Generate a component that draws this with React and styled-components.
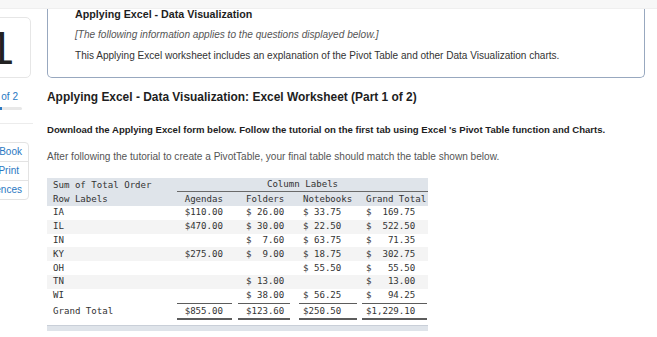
import React from 'react';
import styled, { createGlobalStyle } from 'styled-components';

const GlobalStyle = createGlobalStyle`
  html, body {
    margin: 0;
    padding: 0;
    background: #fff;
  }
  body {
    font-family: "Liberation Sans", Arial, sans-serif;
    color: #222;
    overflow: hidden;
  }
`;

const Page = styled.div`
  width: 657px;
  height: 337px;
  overflow: hidden;
`;

const TopBar = styled.div`
  height: 9px;
  background: #f7f7f7;
  border-bottom: 1px solid #efefef;
  box-sizing: border-box;
`;

const Layout = styled.div`
  display: flex;
`;

const Sidebar = styled.aside`
  flex: none;
  width: 34px;
  overflow: hidden;
`;

const SidebarInner = styled.div`
  width: 100px;
  margin-left: -66px;
  display: flex;
  flex-direction: column;
  align-items: flex-end;
`;

const NumberBox = styled.div`
  margin-top: 8px;
  margin-right: 3px;
  width: 60px;
  height: 61px;
  box-sizing: border-box;
  border: 1px solid #e6e6e6;
  border-radius: 5px;
  display: flex;
  align-items: center;
  justify-content: center;
  font-size: 47px;
  color: #222;
`;

const ProgressLabel = styled.div`
  margin-top: 13px;
  margin-right: 16px;
  font-size: 10px;
  line-height: 12px;
  color: #2a78c2;
  white-space: nowrap;
`;

const ProgressTrack = styled.div`
  margin-top: 4px;
  margin-right: 12px;
  width: 60px;
  height: 3px;
  border-radius: 2px;
  background: #e8e8e8;
  overflow: hidden;
`;

const ProgressFill = styled.div`
  height: 100%;
  background: #2a78c2;
`;

const Divider = styled.div`
  margin-top: 13px;
  margin-right: 1px;
  width: 99px;
  height: 1px;
  background: #ececec;
`;

const LinkBox = styled.ul`
  list-style: none;
  margin: 18px 5px 0 0;
  padding: 0;
  width: 70px;
  border: 1px solid #e3e3e3;
  border-radius: 4px;
`;

const LinkItem = styled.li`
  height: 18px;
  line-height: 18px;
  padding-right: ${props => props.$pad}px;
  text-align: right;
  font-size: 10px;
  color: #2a78c2;
  white-space: nowrap;
  border-bottom: ${props => (props.$last ? 'none' : '1px solid #e3e3e3')};
`;

const Main = styled.main`
  flex: none;
  width: 598px;
  margin-left: 13px;
  display: flex;
  flex-direction: column;
`;

const Card = styled.section`
  height: 69px;
  box-sizing: border-box;
  padding-left: 27px;
  border: 1px solid #98a8bf;
  border-top: none;
  border-radius: 0 0 5px 5px;
`;

const CardTitle = styled.div`
  margin-top: -1px;
  font-size: 10.7px;
  line-height: 12px;
  font-weight: bold;
  color: #1e1e1e;
`;

const CardNote = styled.div`
  margin-top: 9px;
  font-size: 10.1px;
  line-height: 12px;
  font-style: italic;
  color: #555;
`;

const CardText = styled.div`
  margin-top: 9px;
  font-size: 10.05px;
  line-height: 12px;
  color: #333;
`;

const Title = styled.h2`
  margin: 11px 0 0;
  font-size: 11.95px;
  line-height: 16px;
  font-weight: bold;
  color: #1e1e1e;
`;

const Instruction = styled.p`
  margin: 18px 0 0;
  font-size: 9.57px;
  line-height: 13px;
  font-weight: bold;
  color: #1e1e1e;
`;

const Note = styled.p`
  margin: 14px 0 0;
  font-size: 10.1px;
  line-height: 13px;
  color: #555;
`;

const PivotWrap = styled.div`
  margin-top: 15px;
  width: 381px;
`;

const Pivot = styled.table`
  width: 381px;
  border-collapse: collapse;
  table-layout: fixed;
  font-family: "DejaVu Sans Mono", "Liberation Mono", monospace;
  font-size: 9.1px;
  color: #333;
`;

const Row = styled.tr`
  background: ${props => props.$bg || '#fff'};
`;

const Cell = styled.td`
  padding: 0;
  height: ${props => props.$h || 13.8}px;
  vertical-align: middle;
`;

const Seg = styled.div`
  margin: 0 ${props => props.$mr || 0}px 0 ${props => props.$ml || 0}px;
  padding: 0 ${props => props.$pr || 0}px 0 ${props => props.$pl || 0}px;
  text-align: ${props => props.$align || 'left'};
  white-space: pre;
  line-height: ${props => props.$lh || 13}px;
  border-top: ${props => (props.$top ? '1px solid #5c5c5c' : 'none')};
  border-bottom: ${props => props.$bottom || 'none'};
`;

const BottomStrip = styled.div`
  margin-top: 5px;
  height: 5px;
  background: #dfe4ea;
  border-top: 1px solid #c9cfd8;
`;

const HEAD_BG = '#dfe4ea';
const STRIPE_BG = '#f4f4f4';

const widths = [128, 60, 59, 66, 68];

// segment offsets and text placement per value column
const cols = [
  { ml: 2, mr: 3, align: 'right', pr: 9, pl: 0 },
  { ml: 3, mr: 4, align: 'left', pr: 0, pl: 8 },
  { ml: 5, mr: 3, align: 'left', pr: 0, pl: 4 },
  { ml: 2, mr: 1, align: 'left', pr: 0, pl: 4 },
];

const headers = ['Agendas', 'Folders', 'Notebooks', 'Grand Total'];

const rows = [
  ['IA', '$110.00', '$ 26.00', '$ 33.75', '$  169.75'],
  ['IL', '$470.00', '$ 30.00', '$ 22.50', '$  522.50'],
  ['IN', '', '$  7.60', '$ 63.75', '$   71.35'],
  ['KY', '$275.00', '$  9.00', '$ 18.75', '$  302.75'],
  ['OH', '', '', '$ 55.50', '$   55.50'],
  ['TN', '', '$ 13.00', '', '$   13.00'],
  ['WI', '', '$ 38.00', '$ 56.25', '$   94.25'],
];

const total = ['Grand Total', '$855.00', '$123.60', '$250.50', '$1,229.10'];

const ValueCells = ({ values, ...segProps }) =>
  values.map((v, i) => (
    <Cell key={i} $h={segProps.$h}>
      <Seg
        $ml={cols[i].ml}
        $mr={cols[i].mr}
        $pl={cols[i].pl}
        $pr={cols[i].pr}
        $align={cols[i].align}
        {...segProps}
      >
        {v}
      </Seg>
    </Cell>
  ));

const PivotTable = () => (
  <PivotWrap>
    <Pivot>
      <colgroup>
        {widths.map((w, i) => (
          <col key={i} style={{ width: w }} />
        ))}
      </colgroup>
      <tbody>
        <Row $bg={HEAD_BG}>
          <Cell $h={14}>
            <Seg $pl={6}>Sum of Total Order</Seg>
          </Cell>
          <Cell colSpan={4} $h={14}>
            <Seg $ml={2} $align="center" $bottom="1px solid #6a6a6a" $lh={13}>
              Column Labels
            </Seg>
          </Cell>
        </Row>
        <Row $bg={HEAD_BG}>
          <Cell $h={14}>
            <Seg $pl={6}>Row Labels</Seg>
          </Cell>
          <ValueCells values={headers} $h={14} />
        </Row>
        {rows.map((r, idx) => (
          <Row key={r[0]} $bg={idx % 2 === 1 ? STRIPE_BG : '#fff'}>
            <Cell>
              <Seg $pl={6}>{r[0]}</Seg>
            </Cell>
            <ValueCells values={r.slice(1)} />
          </Row>
        ))}
        <Row>
          <Cell $h={17.4}>
            <Seg $pl={6}>{total[0]}</Seg>
          </Cell>
          <ValueCells
            values={total.slice(1)}
            $h={17.4}
            $top
            $lh={14}
            $bottom="2px solid #5c5c5c"
          />
        </Row>
      </tbody>
    </Pivot>
    <BottomStrip />
  </PivotWrap>
);

const sideLinks = [
  { label: 'eBook', pad: 6 },
  { label: 'Print', pad: 9 },
  { label: 'References', pad: 6 },
];

const App = () => (
  <Page>
    <GlobalStyle />
    <TopBar />
    <Layout>
      <Sidebar>
        <SidebarInner>
          <NumberBox>1</NumberBox>
          <ProgressLabel>1 of 2</ProgressLabel>
          <ProgressTrack>
            <ProgressFill style={{ width: '67%' }} />
          </ProgressTrack>
          <Divider />
          <LinkBox>
            {sideLinks.map((l, i) => (
              <LinkItem key={l.label} $pad={l.pad} $last={i === sideLinks.length - 1}>
                {l.label}
              </LinkItem>
            ))}
          </LinkBox>
        </SidebarInner>
      </Sidebar>
      <Main>
        <Card>
          <CardTitle>Applying Excel - Data Visualization</CardTitle>
          <CardNote>[The following information applies to the questions displayed below.]</CardNote>
          <CardText>
            This Applying Excel worksheet includes an explanation of the Pivot Table and other Data
            Visualization charts.
          </CardText>
        </Card>
        <Title>Applying Excel - Data Visualization: Excel Worksheet (Part 1 of 2)</Title>
        <Instruction>
          Download the Applying Excel form below. Follow the tutorial on the first tab using Excel 's
          Pivot Table function and Charts.
        </Instruction>
        <Note>
          After following the tutorial to create a PivotTable, your final table should match the
          table shown below.
        </Note>
        <PivotTable />
      </Main>
    </Layout>
  </Page>
);

export default App;
